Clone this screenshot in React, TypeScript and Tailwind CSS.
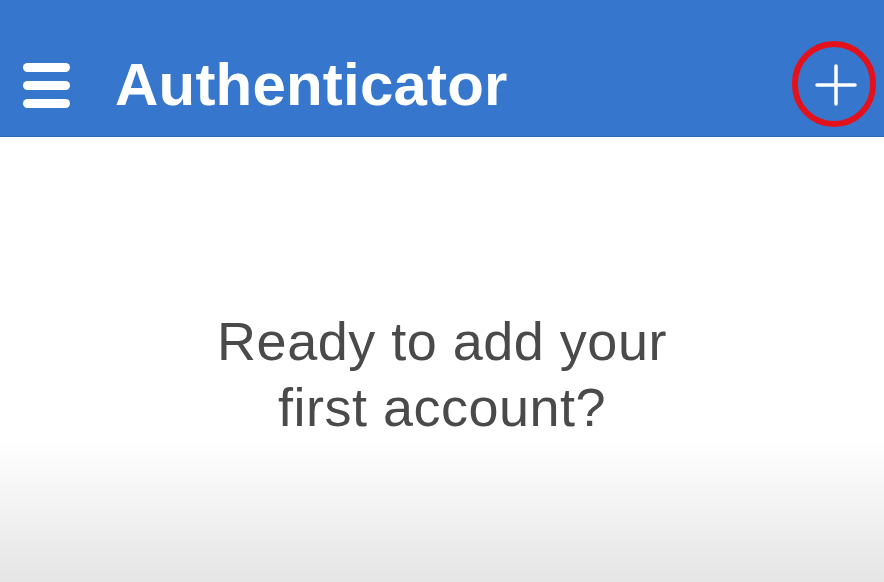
import { useState } from 'react';

export default function App() {
  const [accounts] = useState<string[]>([]);

  return (
    <div className="w-full h-[582px] flex flex-col overflow-hidden font-['Liberation_Sans',Arial,sans-serif]">
      {/* Top bar */}
      <header className="h-[137px] shrink-0 bg-[#3677cd] border-b border-[#2c69ba] flex items-center pt-[34px] pl-[23px] pr-[26px]">
        <button className="w-[47px] flex flex-col gap-[9px]" aria-label="Menu">
          <span className="block h-[9px] rounded-full bg-white" />
          <span className="block h-[9px] rounded-full bg-white" />
          <span className="block h-[9px] rounded-full bg-white" />
        </button>
        <h1 className="ml-[45px] text-white font-bold text-[60px] leading-none tracking-[0.2px]">
          Authenticator
        </h1>
        <div className="ml-auto relative w-[44px] h-[44px] flex items-center justify-center">
          <svg width="44" height="44" viewBox="0 0 44 44" fill="none" stroke="white" strokeWidth="3.5" strokeLinecap="round">
            <path d="M22 3v38M3 22h38" />
          </svg>
          {/* red annotation ring */}
          <span className="absolute left-[-22px] top-[-22px] w-[84px] h-[86px] rounded-full border-[6px] border-[#e3111b] pointer-events-none" />
        </div>
      </header>

      {/* Empty state */}
      <main className="flex-1 bg-[linear-gradient(to_bottom,#ffffff_68%,#e5e5e5_100%)] flex flex-col items-center pt-[171px]">
        {accounts.length === 0 && (
          <p className="text-center text-[#4a4a4a] text-[54px] leading-[66px] tracking-[0.5px]">
            Ready to add your
            <br />
            first account?
          </p>
        )}
      </main>
    </div>
  );
}
